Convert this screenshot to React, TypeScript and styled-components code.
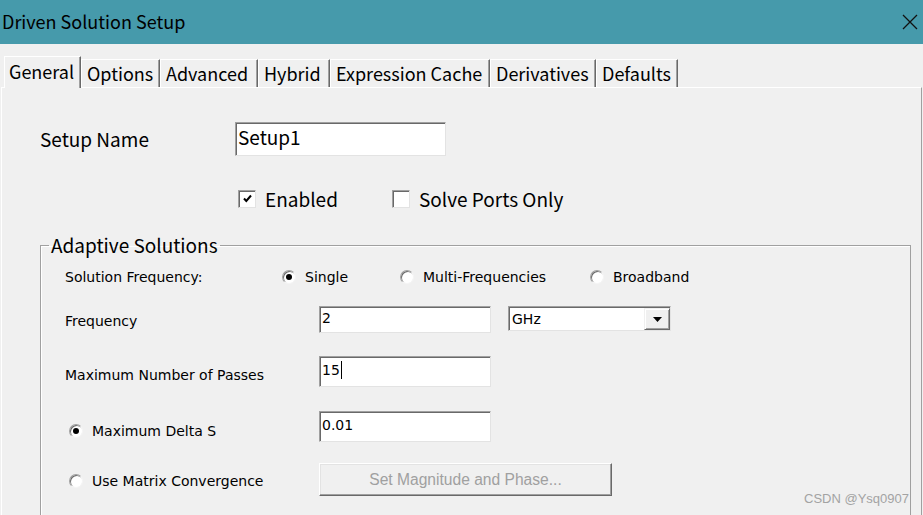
import * as React from 'react'
import styled, { createGlobalStyle } from 'styled-components'

const GlobalStyle = createGlobalStyle`
  html, body {
    margin: 0;
    padding: 0;
    background: #f0f0f0;
  }
  body {
    font-family: "Noto Sans CJK SC", "Noto Sans", sans-serif;
    color: #000;
  }
`

const Window = styled.div`
  position: relative;
  width: 923px;
  height: 515px;
  overflow: hidden;
  background: #f0f0f0;
  display: flex;
  flex-direction: column;
`

const TitleBar = styled.div`
  flex: none;
  height: 44px;
  background: #469aab;
  display: flex;
  align-items: center;
  justify-content: space-between;
  padding: 0 5px 0 2px;
`

const Title = styled.span`
  font-size: 18px;
  line-height: 24px;
  margin-top: -2px;
`

const CloseIcon = styled.svg`
  width: 16px;
  height: 16px;
  margin-top: -1px;
`

const TabStrip = styled.div`
  flex: none;
  height: 43px;
  display: flex;
  align-items: flex-end;
  padding-left: 4px;
  position: relative;
  z-index: 1;
`

const Tab = styled.div<{ $w: number; $active?: boolean }>`
  box-sizing: border-box;
  width: ${p => p.$w}px;
  height: ${p => (p.$active ? 32 : 28)}px;
  margin-bottom: ${p => (p.$active ? -1 : 0)}px;
  padding-left: ${p => (p.$active ? 4 : 5)}px;
  background: #f0f0f0;
  border-top: 1px solid #fff;
  border-left: 1px solid #fff;
  border-right: 1px solid #696969;
  box-shadow: inset -1px 0 0 #a0a0a0;
  font-size: 18px;
  line-height: ${p => (p.$active ? 28 : 26)}px;
  white-space: nowrap;
  overflow: hidden;
`

const Panel = styled.div`
  flex: 1;
  margin-left: 1px;
  width: 921px;
  box-sizing: border-box;
  border-top: 1px solid #fff;
  border-left: 1px solid #fff;
  border-right: 1px solid #a0a0a0;
  padding-left: 38px;
  display: flex;
  flex-direction: column;
`

const SetupRow = styled.div`
  margin-top: 34px;
  display: flex;
  align-items: center;
`

const BigLabel = styled.span<{ $w?: number }>`
  width: ${p => (p.$w ? `${p.$w}px` : 'auto')};
  flex: none;
  font-size: 19px;
  margin-top: -1px;
`

const TextBox = styled.div<{ $w: number; $h: number; $big?: boolean }>`
  box-sizing: border-box;
  width: ${p => p.$w}px;
  height: ${p => p.$h}px;
  background: #fff;
  border: 1px solid;
  border-color: #a0a0a0 #e3e3e3 #e3e3e3 #a0a0a0;
  box-shadow: inset 1px 1px 0 #696969;
  padding-left: 2px;
  display: flex;
  align-items: ${p => (p.$big ? 'flex-start' : 'center')};
  font-family: ${p => (p.$big ? '"Noto Sans CJK SC", "Noto Sans", sans-serif' : '"DejaVu Sans", sans-serif')};
  font-size: ${p => (p.$big ? 19 : 14)}px;
  line-height: ${p => (p.$big ? 28 : 18)}px;
  ${p => (p.$big ? '' : 'padding-bottom: 3px;')}
`

const Caret = styled.span`
  display: inline-block;
  width: 1px;
  height: 18px;
  background: #000;
  margin-left: 1px;
`

const CheckRow = styled.div`
  margin-top: 30px;
  height: 24px;
  padding-left: 198px;
  display: flex;
  align-items: center;
`

const CheckItem = styled.label<{ $w?: number }>`
  width: ${p => (p.$w ? `${p.$w}px` : 'auto')};
  display: flex;
  align-items: center;
  gap: 9px;
  font-size: 19px;
`

const Box = styled.span`
  box-sizing: border-box;
  width: 18px;
  height: 18px;
  margin-top: 1px;
  background: #fff;
  border: 1px solid;
  border-color: #a0a0a0 #e3e3e3 #e3e3e3 #a0a0a0;
  box-shadow: inset 1px 1px 0 #696969;
  display: flex;
  align-items: center;
  justify-content: center;
`

const Group = styled.fieldset`
  margin: 23px 0 0 0;
  width: 871px;
  box-sizing: border-box;
  padding: 0;
  border: 1px solid #a0a0a0;
  box-shadow: inset 1px 1px 0 #fff;
  min-height: 320px;
`

const Legend = styled.legend`
  margin-left: 8px;
  padding: 0 2px;
  font-size: 19px;
  line-height: 24px;
`

const GroupBody = styled.div`
  padding-left: 24px;
  display: flex;
  flex-direction: column;
`

const Row = styled.div<{ $gap: number; $h: number }>`
  margin-top: ${p => p.$gap}px;
  height: ${p => p.$h}px;
  display: flex;
  align-items: center;
`

const SmallLabel = styled.span<{ $w: number; $indent?: number; $dy?: number }>`
  width: ${p => p.$w}px;
  flex: none;
  box-sizing: border-box;
  padding-left: ${p => p.$indent ?? 0}px;
  margin-top: ${p => (p.$dy ?? 0) * 2}px;
  display: flex;
  align-items: center;
  font-family: "DejaVu Sans", sans-serif;
  font-size: 14px;
  white-space: nowrap;
`

const RadioItem = styled.span<{ $w?: number }>`
  width: ${p => (p.$w ? `${p.$w}px` : 'auto')};
  flex: none;
  display: flex;
  align-items: center;
  gap: 9px;
  font-family: "DejaVu Sans", sans-serif;
  font-size: 14px;
  white-space: nowrap;
`

const Circle = styled.span<{ $on?: boolean }>`
  box-sizing: border-box;
  width: 14px;
  height: 14px;
  border-radius: 50%;
  background: #fff;
  border: 1px solid;
  border-color: #a0a0a0 #f4f4f4 #f4f4f4 #a0a0a0;
  box-shadow: inset 1px 1px 0 #696969;
  display: flex;
  align-items: center;
  justify-content: center;
  &::after {
    content: '';
    width: 6px;
    height: 6px;
    border-radius: 50%;
    background: ${p => (p.$on ? '#000' : 'transparent')};
  }
`

const Select = styled.div`
  box-sizing: border-box;
  width: 163px;
  height: 25px;
  margin-left: 17px;
  align-self: flex-start;
  background: #fff;
  border: 1px solid;
  border-color: #a0a0a0 #e3e3e3 #e3e3e3 #a0a0a0;
  box-shadow: inset 1px 1px 0 #696969;
  display: flex;
  align-items: stretch;
  font-family: "DejaVu Sans", sans-serif;
  font-size: 14px;
`

const SelectValue = styled.span`
  flex: 1;
  padding-left: 3px;
  display: flex;
  align-items: center;
`

const DropButton = styled.span`
  box-sizing: border-box;
  width: 26px;
  margin: 1px 0 0 0;
  background: #f0f0f0;
  border: 1px solid;
  border-color: #f0f0f0 #696969 #696969 #f0f0f0;
  box-shadow: inset 1px 1px 0 #fff, inset -1px -1px 0 #a0a0a0;
  display: flex;
  align-items: center;
  justify-content: center;
`

const PushButton = styled.div`
  box-sizing: border-box;
  width: 293px;
  height: 33px;
  background: #f0f0f0;
  border: 1px solid;
  border-color: #fff #696969 #696969 #fff;
  box-shadow: inset -1px -1px 0 #a0a0a0, inset 1px 1px 0 #e3e3e3;
  display: flex;
  align-items: center;
  justify-content: center;
  font-family: "Liberation Sans", sans-serif;
  font-size: 15.6px;
  color: #a0a0a0;
`

const Watermark = styled.span`
  position: absolute;
  right: 14px;
  bottom: 9px;
  font-family: "Liberation Sans", sans-serif;
  font-size: 13px;
  color: #a3a3a3;
`

const tabs: [string, number][] = [
  ['General', 77],
  ['Options', 79],
  ['Advanced', 98],
  ['Hybrid', 72],
  ['Expression Cache', 160],
  ['Derivatives', 106],
  ['Defaults', 82],
]

export default function App() {
  return (
    <Window>
      <GlobalStyle />
      <TitleBar>
        <Title>Driven Solution Setup</Title>
        <CloseIcon viewBox="0 0 16 16">
          <path d="M1 1 L15 15 M15 1 L1 15" stroke="#111" strokeWidth="1.3" fill="none" />
        </CloseIcon>
      </TitleBar>

      <TabStrip>
        {tabs.map(([name, w], i) => (
          <Tab key={name} $w={w} $active={i === 0}>
            {name}
          </Tab>
        ))}
      </TabStrip>

      <Panel>
        <SetupRow>
          <BigLabel $w={195}>Setup Name</BigLabel>
          <TextBox $w={211} $h={34} $big>
            Setup1
          </TextBox>
        </SetupRow>

        <CheckRow>
          <CheckItem $w={154}>
            <Box>
              <svg width="11" height="11" viewBox="0 0 11 11">
                <path d="M2 5.5 L4.3 8 L9 2.5" stroke="#000" strokeWidth="2" fill="none" />
              </svg>
            </Box>
            Enabled
          </CheckItem>
          <CheckItem>
            <Box />
            Solve Ports Only
          </CheckItem>
        </CheckRow>

        <Group>
          <Legend>Adaptive Solutions</Legend>
          <GroupBody>
            <Row $gap={10} $h={20}>
              <SmallLabel $w={217}>Solution Frequency:</SmallLabel>
              <RadioItem $w={118}>
                <Circle $on />
                Single
              </RadioItem>
              <RadioItem $w={190}>
                <Circle />
                Multi-Frequencies
              </RadioItem>
              <RadioItem>
                <Circle />
                Broadband
              </RadioItem>
            </Row>

            <Row $gap={19} $h={27}>
              <SmallLabel $w={254} $dy={1}>Frequency</SmallLabel>
              <TextBox $w={172} $h={27}>2</TextBox>
              <Select>
                <SelectValue>GHz</SelectValue>
                <DropButton>
                  <svg width="9" height="5" viewBox="0 0 9 5">
                    <path d="M0 0 H9 L4.5 5 Z" fill="#000" />
                  </svg>
                </DropButton>
              </Select>
            </Row>

            <Row $gap={23} $h={31}>
              <SmallLabel $w={254} $dy={3}>Maximum Number of Passes</SmallLabel>
              <TextBox $w={172} $h={31}>
                15<Caret />
              </TextBox>
            </Row>

            <Row $gap={24} $h={31}>
              <SmallLabel $w={254} $indent={4} $dy={4}>
                <RadioItem>
                  <Circle $on />
                  Maximum Delta S
                </RadioItem>
              </SmallLabel>
              <TextBox $w={172} $h={31}>0.01</TextBox>
            </Row>

            <Row $gap={21} $h={33}>
              <SmallLabel $w={254} $indent={4} $dy={1.5}>
                <RadioItem>
                  <Circle />
                  Use Matrix Convergence
                </RadioItem>
              </SmallLabel>
              <PushButton>Set Magnitude and Phase...</PushButton>
            </Row>
          </GroupBody>
        </Group>
      </Panel>

      <Watermark>CSDN @Ysq0907</Watermark>
    </Window>
  )
}
